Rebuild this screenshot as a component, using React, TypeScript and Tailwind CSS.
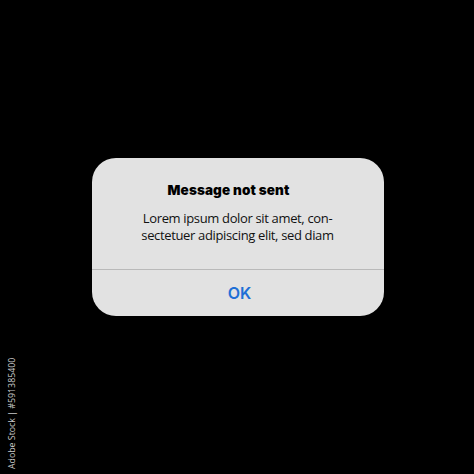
export default function App() {
  return (
    <div className="relative h-[474px] w-[474px] overflow-hidden bg-black">
      <div className="flex h-full w-full flex-col items-center pt-[158px] pl-[1px]">
        <div className="flex w-[292px] flex-col rounded-[24px] bg-[#e2e2e2]">
          <div className="flex h-[111px] flex-col items-center pt-[23px]">
            <div className="pr-[18px] text-[13.5px] font-black leading-[18px] tracking-[0.1px] text-black [font-family:Inter,'Noto_Sans',sans-serif]">
              Message not sent
            </div>
            <div className="mt-[11px] text-center text-[13px] leading-[17px] tracking-[-0.35px] text-[#111] [font-family:'Open_Sans',sans-serif]">
              Lorem ipsum dolor sit amet, con-
              <br />
              sectetuer adipiscing elit, sed diam
            </div>
          </div>
          <div className="h-px bg-[#b9b9b9]" />
          <div className="flex h-[46px] items-center justify-center pl-[4px] text-[16px] font-semibold text-[#1f6fd6] [font-family:Inter,sans-serif]">
            OK
          </div>
        </div>
      </div>
      <div className="absolute left-[5px] top-[360px] flex h-[107px] w-[14px] items-center justify-center whitespace-nowrap rotate-180 text-[8.8px] leading-[14px] text-[#c8c8c8] [writing-mode:vertical-rl] [font-family:'Open_Sans',sans-serif]">
        Adobe Stock | #591385400
      </div>
    </div>
  );
}
